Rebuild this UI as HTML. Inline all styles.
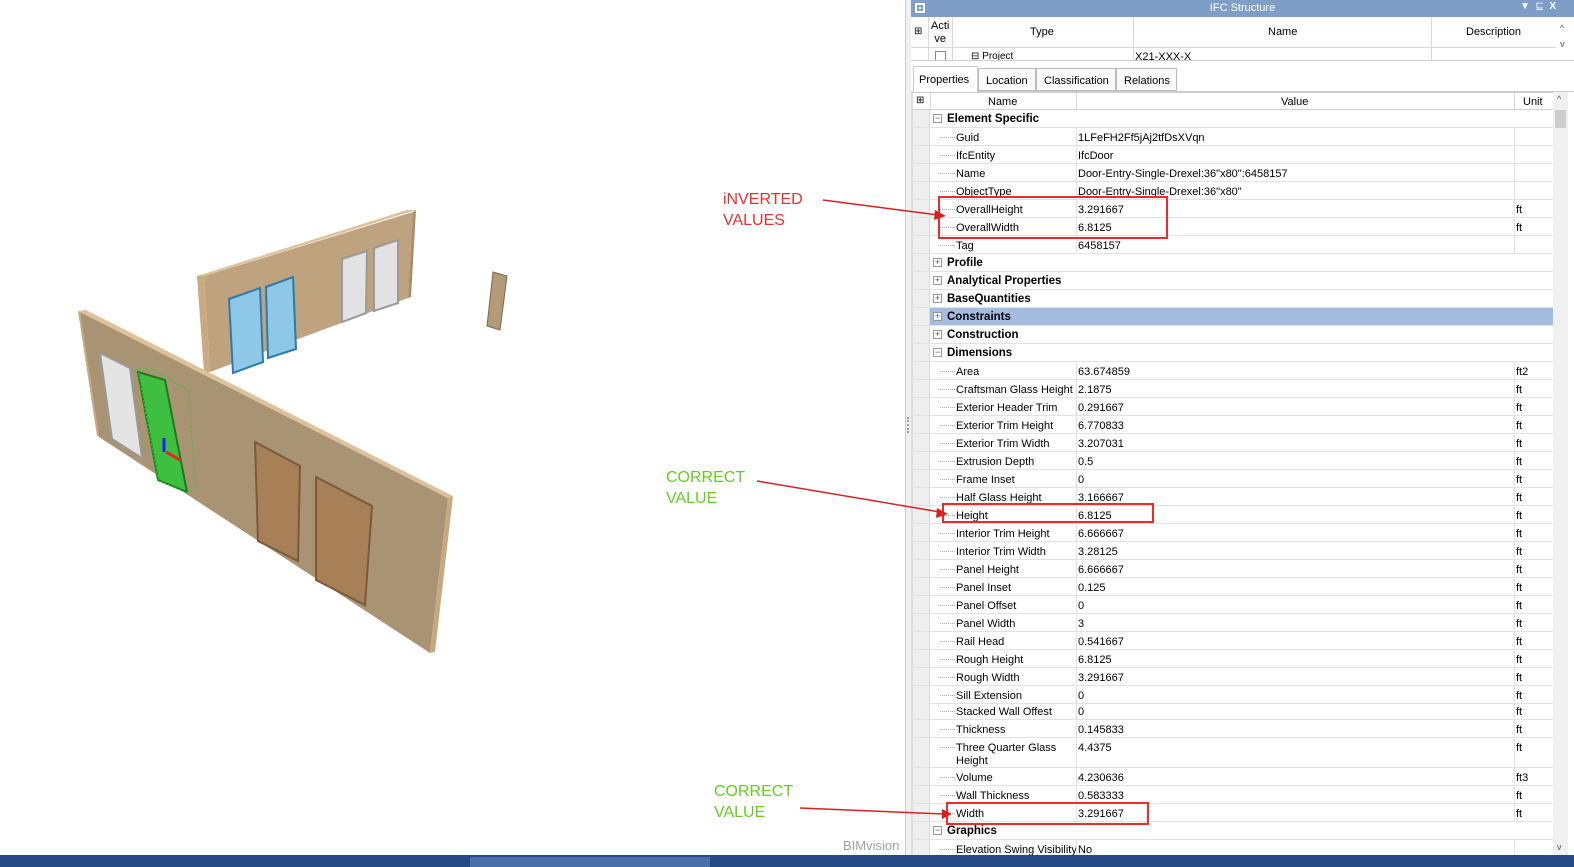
<!DOCTYPE html>
<html><head><meta charset="utf-8"><style>
*{margin:0;padding:0;box-sizing:border-box}
body{width:1574px;height:867px;overflow:hidden;background:#fff;font-family:"Liberation Sans",sans-serif;font-size:11px;color:#000;position:relative}
.a{position:absolute}
.r{position:absolute;left:913px;width:640px;height:18px;border-bottom:1px solid #e2e2e2}
.g{position:absolute;left:0;top:0;width:17px;height:100%;background:#efefef;border-right:1px solid #d8d8d8}
.n{position:absolute;left:43px;top:4px;white-space:nowrap}
.d{position:absolute;left:27px;top:9px;width:15px;border-top:1px dotted #aaa}
.v{position:absolute;left:165px;top:4px;white-space:nowrap}
.u{position:absolute;left:603px;top:4px}
.c1{position:absolute;left:163px;top:0;height:100%;border-left:1px solid #e2e2e2}
.c2{position:absolute;left:601px;top:0;height:100%;border-left:1px solid #e2e2e2}
.grp .n{left:34px;font-weight:bold;font-size:11.5px;top:3px}
.pm{position:absolute;left:20px;top:4px;width:9px;height:9px;border:1px solid #999;font-size:9px;line-height:7px;text-align:center;color:#555;background:#fff}
.hl{background:#a3bce0}
.box{position:absolute;border:2px solid #ee2a2a}
.lbl{position:absolute;font-size:16px;line-height:21px}
</style></head><body>
<!-- 3D view -->
<svg class="a" style="left:0;top:0" width="905" height="855">
<polygon points="197,276 204,276 210,372 204,372" fill="#c9ab83"/>
<polygon points="204,276 413,212 408,298 210,372" fill="#bfa37f"/>
<polygon points="197,276 407,210 416,210 204,276" fill="#dcc19a"/>
<polygon points="413,212 416,210 411,297 408,298" fill="#a88d69"/>
<polygon points="229,299 260,288 263,362 233,373" fill="#8fc8e6" stroke="#2b7bab" stroke-width="2"/>
<polygon points="266,287 293,277 296,349 268,358" fill="#8fc8e6" stroke="#2b7bab" stroke-width="2"/>
<polygon points="342,259 367,251 366,313 342,322" fill="#e2e2e2" stroke="#999" stroke-width="2"/>
<polygon points="374,248 398,240 398,303 374,311" fill="#e2e2e2" stroke="#999" stroke-width="2"/>
<polygon points="493,272 507,276 500,330 487,326" fill="#b59a78" stroke="#7a6650"/>
<polygon points="80,312 448,498 430,653 99,437" fill="#a89473"/>
<polygon points="78,311 86,310 453,496 448,498" fill="#dcc19a"/>
<polygon points="448,498 453,496 435,652 430,653" fill="#c7a981"/>
<polygon points="78,311 80,312 99,437 97,436" fill="#c7a981"/>
<polygon points="100,353 130,368 142,458 112,439" fill="#e4e4e4" stroke="#999" stroke-width="2"/>
<polygon points="138,372 165,380 187,492 158,480" fill="#3fbf3f" stroke="#1f7a1f" stroke-width="2"/>
<polygon points="138,369 150,368 188,390 196,489 187,493 158,480" fill="none" stroke="#3c3" stroke-width="1" stroke-dasharray="2,2"/>
<line x1="164" y1="438" x2="164" y2="452" stroke="#22f" stroke-width="3"/>
<line x1="166" y1="452" x2="180" y2="460" stroke="#e22" stroke-width="3"/>
<polygon points="255,442 300,466 298,561 258,541" fill="#a88058" stroke="#7a5a3c" stroke-width="2"/>
<polygon points="316,477 372,506 365,605 316,580" fill="#a88058" stroke="#7a5a3c" stroke-width="2"/>
</svg>
<div class="lbl" style="left:723px;top:189px;color:#e8302c">iNVERTED<br>VALUES</div>
<div class="lbl" style="left:666px;top:467px;color:#66cc22">CORRECT<br>VALUE</div>
<div class="lbl" style="left:714px;top:781px;color:#66cc22">CORRECT<br>VALUE</div>
<div class="a" style="left:843px;top:838px;color:#a0a0a0;font-size:13px">BIMvision</div>
<div class="a" style="left:905px;top:0;width:6px;height:855px;background:#f0f0f0;border-left:1px solid #ccc"></div>
<div class="a" style="left:907px;top:417px;width:2px;height:16px;border-left:2px dotted #999"></div>
<!-- right panel -->
<div class="a" style="left:911px;top:0;width:663px;height:855px;background:#fff"></div>
<div class="a" style="left:911px;top:0;width:663px;height:17px;background:#7f9ec7;color:#fff;text-align:center;font-size:11px;line-height:17px">IFC Structure</div>
<div class="a" style="left:915px;top:3px;width:10px;height:10px;background:#fff;border:2px solid #fff;box-shadow:inset 0 0 0 2px #7f9ec7"></div>
<div class="a" style="left:1520px;top:1px;color:#fff;font-size:10px">▼ &nbsp;⊑ &nbsp;<b>X</b></div>
<div class="a" style="left:911px;top:17px;width:645px;height:31px;background:#fff;border-bottom:1px solid #d8d8d8">
 <div class="a" style="left:17px;top:0;width:1px;height:44px;background:#d8d8d8"></div>
 <div class="a" style="left:41px;top:0;width:1px;height:44px;background:#d8d8d8"></div>
 <div class="a" style="left:222px;top:0;width:1px;height:44px;background:#d8d8d8"></div>
 <div class="a" style="left:520px;top:0;width:1px;height:44px;background:#d8d8d8"></div>
 <div class="a" style="left:3px;top:9px;font-size:10px">⊞</div>
 <div class="a" style="left:20px;top:3px;font-size:11px;line-height:13px;text-align:center">Acti<br>ve</div>
 <div class="a" style="left:119px;top:9px">Type</div>
 <div class="a" style="left:357px;top:9px">Name</div>
 <div class="a" style="left:555px;top:9px">Description</div>
</div>
<div class="a" style="left:911px;top:48px;width:645px;height:12px;overflow:hidden">
 <div class="a" style="left:24px;top:3px;width:11px;height:11px;border:1px solid #888"></div>
 <div class="a" style="left:60px;top:3px;font-size:10px">⊟ Project</div>
 <div class="a" style="left:224px;top:3px">X21-XXX-X</div>
</div>
<div class="a" style="left:1560px;top:20px;color:#555;font-size:9px;line-height:16px">^<br>v</div>
<div class="a" style="left:911px;top:60px;width:663px;height:1px;background:#ccc"></div>
<div class="a" style="left:911px;top:91px;width:663px;height:1px;background:#ccc"></div>
<div class="a" style="left:913px;top:66px;width:65px;height:26px;background:#fff;border:1px solid #ccc;border-bottom:none;padding:7px 5px">Properties</div>
<div class="a" style="left:978px;top:68px;width:58px;height:23px;border:1px solid #bbb;padding:6px 7px;background:#fafafa">Location</div>
<div class="a" style="left:1036px;top:68px;width:80px;height:23px;border:1px solid #bbb;padding:6px 7px;background:#fafafa">Classification</div>
<div class="a" style="left:1116px;top:68px;width:61px;height:23px;border:1px solid #bbb;padding:6px 7px;background:#fafafa">Relations</div>
<div class="a" style="left:913px;top:92px;width:640px;height:18px;border-bottom:1px solid #d0d0d0;border-top:1px solid #ccc">
 <div class="a" style="left:3px;top:2px;font-size:10px">⊞</div>
 <div class="a" style="left:17px;top:0;height:18px;border-left:1px solid #d8d8d8"></div>
 <div class="a" style="left:163px;top:0;height:18px;border-left:1px solid #d8d8d8"></div>
 <div class="a" style="left:601px;top:0;height:18px;border-left:1px solid #d8d8d8"></div>
 <div class="a" style="left:75px;top:3px">Name</div>
 <div class="a" style="left:368px;top:3px">Value</div>
 <div class="a" style="left:610px;top:3px">Unit</div>
</div>
<div class="a" style="left:1553px;top:92px;width:15px;height:763px;background:#f0f0f0"></div>
<div class="a" style="left:1555px;top:110px;width:11px;height:18px;background:#cdcdcd"></div>
<div class="a" style="left:1557px;top:94px;color:#555;font-size:9px">^</div>
<div class="a" style="left:1557px;top:842px;color:#555;font-size:9px">v</div>
<div class="a" style="left:911px;top:92px;width:2px;height:763px;background:#ddd"></div>

<div class="r grp" style="top:110px"><div class="g"></div><div class="pm">−</div><div class="n">Element Specific</div></div>
<div class="r" style="top:128px"><div class="g"></div><div class="d"></div><div class="n">Guid</div><div class="c1"></div><div class="v">1LFeFH2Ff5jAj2tfDsXVqn</div><div class="c2"></div></div>
<div class="r" style="top:146px"><div class="g"></div><div class="d"></div><div class="n">IfcEntity</div><div class="c1"></div><div class="v">IfcDoor</div><div class="c2"></div></div>
<div class="r" style="top:164px"><div class="g"></div><div class="d"></div><div class="n">Name</div><div class="c1"></div><div class="v">Door-Entry-Single-Drexel:36"x80":6458157</div><div class="c2"></div></div>
<div class="r" style="top:182px"><div class="g"></div><div class="d"></div><div class="n">ObjectType</div><div class="c1"></div><div class="v">Door-Entry-Single-Drexel:36"x80"</div><div class="c2"></div></div>
<div class="r" style="top:200px"><div class="g"></div><div class="d"></div><div class="n">OverallHeight</div><div class="c1"></div><div class="v">3.291667</div><div class="c2"></div><div class="u">ft</div></div>
<div class="r" style="top:218px"><div class="g"></div><div class="d"></div><div class="n">OverallWidth</div><div class="c1"></div><div class="v">6.8125</div><div class="c2"></div><div class="u">ft</div></div>
<div class="r" style="top:236px"><div class="g"></div><div class="d"></div><div class="n">Tag</div><div class="c1"></div><div class="v">6458157</div><div class="c2"></div></div>
<div class="r grp" style="top:254px"><div class="g"></div><div class="pm">+</div><div class="n">Profile</div></div>
<div class="r grp" style="top:272px"><div class="g"></div><div class="pm">+</div><div class="n">Analytical Properties</div></div>
<div class="r grp" style="top:290px"><div class="g"></div><div class="pm">+</div><div class="n">BaseQuantities</div></div>
<div class="r grp" style="top:308px"><div class="g"></div><div class="a hl" style="left:17px;top:0;width:623px;height:17px"></div><div class="pm">+</div><div class="n">Constraints</div></div>
<div class="r grp" style="top:326px"><div class="g"></div><div class="pm">+</div><div class="n">Construction</div></div>
<div class="r grp" style="top:344px"><div class="g"></div><div class="pm">−</div><div class="n">Dimensions</div></div>
<div class="r" style="top:362px"><div class="g"></div><div class="d"></div><div class="n">Area</div><div class="c1"></div><div class="v">63.674859</div><div class="c2"></div><div class="u">ft2</div></div>
<div class="r" style="top:380px"><div class="g"></div><div class="d"></div><div class="n">Craftsman Glass Height</div><div class="c1"></div><div class="v">2.1875</div><div class="c2"></div><div class="u">ft</div></div>
<div class="r" style="top:398px"><div class="g"></div><div class="d"></div><div class="n">Exterior Header Trim</div><div class="c1"></div><div class="v">0.291667</div><div class="c2"></div><div class="u">ft</div></div>
<div class="r" style="top:416px"><div class="g"></div><div class="d"></div><div class="n">Exterior Trim Height</div><div class="c1"></div><div class="v">6.770833</div><div class="c2"></div><div class="u">ft</div></div>
<div class="r" style="top:434px"><div class="g"></div><div class="d"></div><div class="n">Exterior Trim Width</div><div class="c1"></div><div class="v">3.207031</div><div class="c2"></div><div class="u">ft</div></div>
<div class="r" style="top:452px"><div class="g"></div><div class="d"></div><div class="n">Extrusion Depth</div><div class="c1"></div><div class="v">0.5</div><div class="c2"></div><div class="u">ft</div></div>
<div class="r" style="top:470px"><div class="g"></div><div class="d"></div><div class="n">Frame Inset</div><div class="c1"></div><div class="v">0</div><div class="c2"></div><div class="u">ft</div></div>
<div class="r" style="top:488px"><div class="g"></div><div class="d"></div><div class="n">Half Glass Height</div><div class="c1"></div><div class="v">3.166667</div><div class="c2"></div><div class="u">ft</div></div>
<div class="r" style="top:506px"><div class="g"></div><div class="d"></div><div class="n">Height</div><div class="c1"></div><div class="v">6.8125</div><div class="c2"></div><div class="u">ft</div></div>
<div class="r" style="top:524px"><div class="g"></div><div class="d"></div><div class="n">Interior Trim Height</div><div class="c1"></div><div class="v">6.666667</div><div class="c2"></div><div class="u">ft</div></div>
<div class="r" style="top:542px"><div class="g"></div><div class="d"></div><div class="n">Interior Trim Width</div><div class="c1"></div><div class="v">3.28125</div><div class="c2"></div><div class="u">ft</div></div>
<div class="r" style="top:560px"><div class="g"></div><div class="d"></div><div class="n">Panel Height</div><div class="c1"></div><div class="v">6.666667</div><div class="c2"></div><div class="u">ft</div></div>
<div class="r" style="top:578px"><div class="g"></div><div class="d"></div><div class="n">Panel Inset</div><div class="c1"></div><div class="v">0.125</div><div class="c2"></div><div class="u">ft</div></div>
<div class="r" style="top:596px"><div class="g"></div><div class="d"></div><div class="n">Panel Offset</div><div class="c1"></div><div class="v">0</div><div class="c2"></div><div class="u">ft</div></div>
<div class="r" style="top:614px"><div class="g"></div><div class="d"></div><div class="n">Panel Width</div><div class="c1"></div><div class="v">3</div><div class="c2"></div><div class="u">ft</div></div>
<div class="r" style="top:632px"><div class="g"></div><div class="d"></div><div class="n">Rail Head</div><div class="c1"></div><div class="v">0.541667</div><div class="c2"></div><div class="u">ft</div></div>
<div class="r" style="top:650px"><div class="g"></div><div class="d"></div><div class="n">Rough Height</div><div class="c1"></div><div class="v">6.8125</div><div class="c2"></div><div class="u">ft</div></div>
<div class="r" style="top:668px"><div class="g"></div><div class="d"></div><div class="n">Rough Width</div><div class="c1"></div><div class="v">3.291667</div><div class="c2"></div><div class="u">ft</div></div>
<div class="r" style="top:686px"><div class="g"></div><div class="d"></div><div class="n">Sill Extension</div><div class="c1"></div><div class="v">0</div><div class="c2"></div><div class="u">ft</div></div>
<div class="r" style="top:702px"><div class="g"></div><div class="d"></div><div class="n">Stacked Wall Offest</div><div class="c1"></div><div class="v">0</div><div class="c2"></div><div class="u">ft</div></div>
<div class="r" style="top:720px"><div class="g"></div><div class="d"></div><div class="n">Thickness</div><div class="c1"></div><div class="v">0.145833</div><div class="c2"></div><div class="u">ft</div></div>
<div class="r" style="top:738px;height:30px"><div class="g"></div><div class="d"></div><div class="n" style="line-height:13px">Three Quarter Glass<br>Height</div><div class="c1"></div><div class="v">4.4375</div><div class="c2"></div><div class="u">ft</div></div>
<div class="r" style="top:768px"><div class="g"></div><div class="d"></div><div class="n">Volume</div><div class="c1"></div><div class="v">4.230636</div><div class="c2"></div><div class="u">ft3</div></div>
<div class="r" style="top:786px"><div class="g"></div><div class="d"></div><div class="n">Wall Thickness</div><div class="c1"></div><div class="v">0.583333</div><div class="c2"></div><div class="u">ft</div></div>
<div class="r" style="top:804px"><div class="g"></div><div class="d"></div><div class="n">Width</div><div class="c1"></div><div class="v">3.291667</div><div class="c2"></div><div class="u">ft</div></div>
<div class="r grp" style="top:822px"><div class="g"></div><div class="pm">−</div><div class="n">Graphics</div></div>
<div class="r" style="top:840px"><div class="g"></div><div class="d"></div><div class="n">Elevation Swing Visibility</div><div class="c1"></div><div class="v">No</div><div class="c2"></div></div>

<div class="box" style="left:938px;top:196px;width:230px;height:43px"></div>
<div class="box" style="left:942px;top:503px;width:212px;height:20px"></div>
<div class="box" style="left:946px;top:802px;width:203px;height:23px"></div>
<svg class="a" style="left:0;top:0" width="960" height="855">
<line x1="823" y1="200" x2="938" y2="215" stroke="#d92020" stroke-width="1.5"/>
<polygon points="946,216 935,210 934,220" fill="#d92020"/>
<line x1="757" y1="481" x2="940" y2="512" stroke="#d92020" stroke-width="1.5"/>
<polygon points="948,514 937,508 936,518" fill="#d92020"/>
<line x1="800" y1="808" x2="944" y2="814" stroke="#d92020" stroke-width="1.5"/>
<polygon points="952,814 942,809 942,819" fill="#d92020"/>
</svg>
<div class="a" style="left:0;top:855px;width:1574px;height:12px;background:#254a85"></div>
<div class="a" style="left:470px;top:857px;width:240px;height:10px;background:#4a6fa8"></div>
</body></html>
